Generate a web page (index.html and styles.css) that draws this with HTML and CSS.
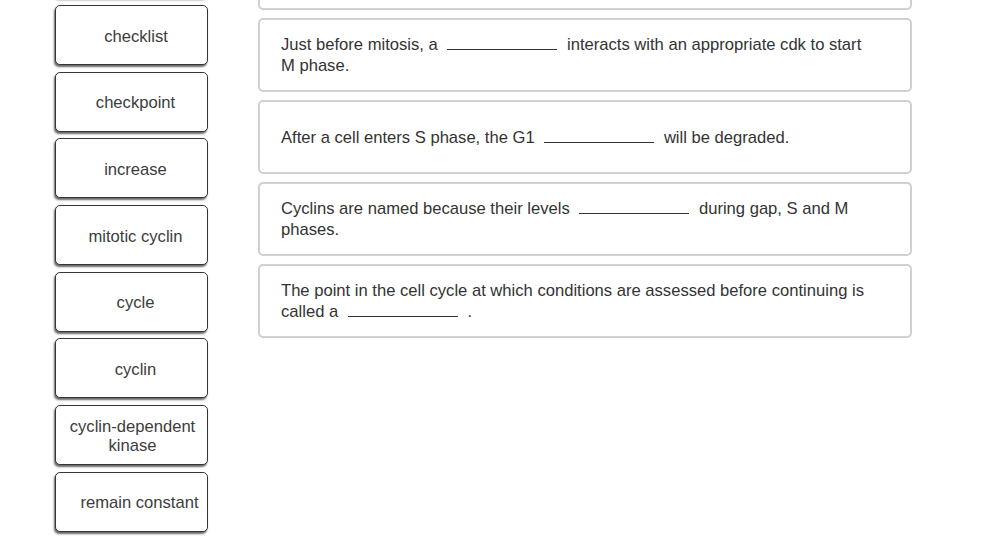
FILE: index.html
```html
<!DOCTYPE html>
<html lang="en">
<head>
<meta charset="utf-8">
<title>Cell cycle matching</title>
<link rel="stylesheet" href="styles.css">
</head>
<body>
<div class="page">
  <div class="bank">
    <div class="chip" aria-hidden="true"></div>
    <div class="chip chip-checklist">checklist</div>
    <div class="chip">checkpoint</div>
    <div class="chip">increase</div>
    <div class="chip">mitotic cyclin</div>
    <div class="chip">cycle</div>
    <div class="chip">cyclin</div>
    <div class="chip chip-two">cyclin-dependent kinase</div>
    <div class="chip chip-wide">remain constant</div>
  </div>
  <div class="questions">
    <div class="card" aria-hidden="true"></div>
    <div class="card"><p>Just before mitosis, a <span class="blank"></span> interacts with an appropriate cdk to start M phase.</p></div>
    <div class="card"><p>After a cell enters S phase, the G1 <span class="blank"></span> will be degraded.</p></div>
    <div class="card"><p>Cyclins are named because their levels <span class="blank"></span> during gap, S and M phases.</p></div>
    <div class="card"><p>The point in the cell cycle at which conditions are assessed before continuing is called a <span class="blank"></span> .</p></div>
  </div>
</div>
</body>
</html>
```
FILE: styles.css
```css
html, body {
  margin: 0;
  padding: 0;
  background: #ffffff;
  height: 555px;
  overflow: hidden;
}

.page {
  display: flex;
  align-items: flex-start;
  gap: 50px;
  padding-left: 55px;
  font-family: "Liberation Sans", Arial, sans-serif;
  font-size: 16.6px;
  color: #333333;
}

.bank {
  display: flex;
  flex-direction: column;
  gap: 6.7px;
  margin-top: -61.7px;
  width: 153px;
}

.chip {
  box-sizing: border-box;
  height: 60px;
  border: 1px solid #353535;
  border-radius: 5px;
  background: #ffffff;
  box-shadow: -1px 2px 2px rgba(0, 0, 0, 0.6);
  display: flex;
  align-items: center;
  justify-content: center;
  text-align: center;
  padding: 2px 4px 0 12px;
  line-height: 19px;
  color: #3c3c3c;
}

.chip-checklist {
  padding-left: 13px;
}

.chip-two {
  padding: 2px 9px 0 11px;
}

.chip-wide {
  padding: 2px 0 0 16px;
}

.questions {
  display: flex;
  flex-direction: column;
  gap: 8px;
  margin-top: -64px;
  width: 654px;
}

.card {
  box-sizing: border-box;
  height: 74px;
  border: 2px solid #d0d0d0;
  border-radius: 5px;
  display: flex;
  align-items: center;
  padding: 0 44px 0 21px;
}

.card p {
  margin: 0;
  line-height: 21px;
}

.blank {
  display: inline-block;
  width: 110px;
  height: 13px;
  border-bottom: 1px solid #333333;
  margin: 0 5px;
  vertical-align: baseline;
}
```
